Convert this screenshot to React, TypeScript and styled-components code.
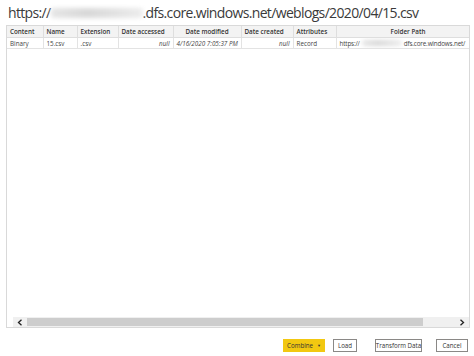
import React from "react";
import styled, { createGlobalStyle } from "styled-components";

const Global = createGlobalStyle`
  html, body { margin: 0; padding: 0; background: #fff; }
  body { font-family: "Open Sans", "Noto Sans", sans-serif; color: #252423; }
  #root { width: 474px; height: 356px; overflow: hidden; }
`;

const Page = styled.div`
  width: 474px;
  height: 356px;
  display: flex;
  flex-direction: column;
  box-sizing: border-box;
  padding: 0 4px 0 6px;
`;

const Title = styled.div`
  height: 25px;
  display: flex;
  align-items: center;
  padding-left: 2px;
  font-size: 14px;
  color: #3a3a3a;
  white-space: nowrap;
  letter-spacing: -0.65px;
`;

const Blur = styled.span<{ $w: number; $h: number }>`
  display: inline-block;
  flex-shrink: 0;
  width: ${(p) => p.$w}px;
  height: ${(p) => p.$h}px;
  background: linear-gradient(90deg, #e6e6e6, #d8d8d8 40%, #e2e2e2 70%, #ededed);
  filter: blur(2px);
  border-radius: 3px;
  vertical-align: middle;
`;

const Grid = styled.div`
  flex: 1;
  display: flex;
  flex-direction: column;
  border: 1px solid #d9d9d9;
  overflow: hidden;
`;

const Viewport = styled.div`
  flex: 1;
  overflow: hidden;
`;

const Table = styled.table`
  border-collapse: collapse;
  table-layout: fixed;
  width: 500px;
  font-size: 6.3px;
  font-family: "Open Sans", "Noto Sans", sans-serif;
`;

const Th = styled.th<{ $align?: string }>`
  height: 11px;
  padding: 0 3px;
  background: #f3f3f3;
  border: 1px solid #dedede;
  border-top: none;
  font-weight: 600;
  text-align: ${(p) => p.$align || "left"};
  white-space: nowrap;
  overflow: hidden;
  color: #333;
  &:first-child { border-left: none; }
`;

const Td = styled.td<{ $align?: string; $italic?: boolean }>`
  height: 10px;
  padding: 0 3px;
  border: 1px solid #e3e3e3;
  text-align: ${(p) => p.$align || "left"};
  font-style: ${(p) => (p.$italic ? "italic" : "normal")};
  white-space: nowrap;
  overflow: hidden;
  color: #444;
  &:first-child { border-left: none; }
`;

const PathCell = styled.div`
  display: flex;
  align-items: center;
  gap: 2px;
  letter-spacing: -0.15px;
  white-space: nowrap;
`;

const Scrollbar = styled.div`
  height: 10px;
  display: flex;
  align-items: center;
  background: #f0f0f0;
  margin-left: 6px;
`;

const Arrow = styled.div`
  width: 14px;
  height: 10px;
  display: flex;
  align-items: center;
  justify-content: center;
`;

const Thumb = styled.div`
  height: 8px;
  width: 396px;
  background: #cdcdcd;
`;

const Track = styled.div`
  flex: 1;
`;

const Footer = styled.div`
  height: 28px;
  display: flex;
  align-items: flex-start;
  justify-content: flex-end;
  padding: 11px 2px 0 0;
  box-sizing: border-box;
`;

const Button = styled.button<{ $primary?: boolean; $w: number; $ml: number }>`
  flex-shrink: 0;
  box-sizing: border-box;
  width: ${(p) => p.$w}px;
  height: 13px;
  padding: 0;
  margin-left: ${(p) => p.$ml}px;
  font-family: "Open Sans", "Noto Sans", sans-serif;
  font-size: 6.2px;
  white-space: nowrap;
  color: #333;
  background: ${(p) => (p.$primary ? "#f2c811" : "#fff")};
  border: 1px solid ${(p) => (p.$primary ? "#f2c811" : "#8a8886")};
  display: flex;
  align-items: center;
  justify-content: center;
  gap: 4px;
`;

const Caret = styled.span`
  font-size: 4px;
`;

const Chevron = ({ dir }: { dir: "l" | "r" }) => (
  <svg width="6" height="7" viewBox="0 0 6 7">
    <path
      d={dir === "l" ? "M4.5 0.8 L1.5 3.5 L4.5 6.2" : "M1.5 0.8 L4.5 3.5 L1.5 6.2"}
      fill="none"
      stroke="#222"
      strokeWidth="1.3"
    />
  </svg>
);

const cols = [36, 34, 41, 55, 68, 52, 43, 171];

export default function App() {
  return (
    <>
      <Global />
      <Page>
        <Title>
          https://<Blur $w={92} $h={10} />.dfs.core.windows.net/weblogs/2020/04/15.csv
        </Title>
        <Grid>
          <Viewport>
            <Table>
              <colgroup>
                {cols.map((w, i) => (
                  <col key={i} style={{ width: w }} />
                ))}
              </colgroup>
              <thead>
                <tr>
                  <Th>Content</Th>
                  <Th>Name</Th>
                  <Th>Extension</Th>
                  <Th>Date accessed</Th>
                  <Th $align="center">Date modified</Th>
                  <Th>Date created</Th>
                  <Th>Attributes</Th>
                  <Th $align="center" style={{ paddingRight: 30 }}>Folder Path</Th>
                </tr>
              </thead>
              <tbody>
                <tr>
                  <Td>Binary</Td>
                  <Td>15.csv</Td>
                  <Td>.csv</Td>
                  <Td $align="right" $italic>null</Td>
                  <Td $align="right" $italic>4/16/2020 7:05:37 PM</Td>
                  <Td $align="right" $italic>null</Td>
                  <Td>Record</Td>
                  <Td>
                    <PathCell>
                      https://<Blur $w={40} $h={6} />dfs.core.windows.net/
                    </PathCell>
                  </Td>
                </tr>
              </tbody>
            </Table>
          </Viewport>
          <Scrollbar>
            <Arrow>
              <Chevron dir="l" />
            </Arrow>
            <Thumb />
            <Track />
            <Arrow>
              <Chevron dir="r" />
            </Arrow>
          </Scrollbar>
        </Grid>
        <Footer>
          <Button $primary $w={42} $ml={0}>
            Combine <Caret>▼</Caret>
          </Button>
          <Button $w={24} $ml={8}>Load</Button>
          <Button $w={47} $ml={18}>Transform Data</Button>
          <Button $w={32} $ml={14}>Cancel</Button>
        </Footer>
      </Page>
    </>
  );
}
